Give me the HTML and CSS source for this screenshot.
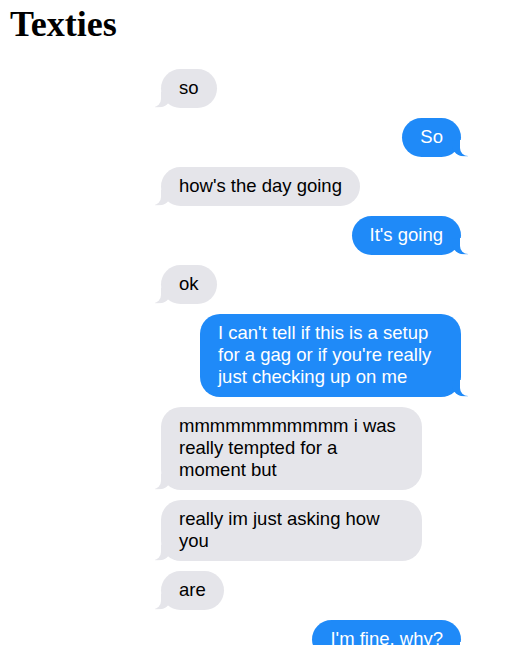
FILE: index.html
```
<!DOCTYPE html>
<html lang="en">
<head>
    <meta charset="UTF-8">
    <meta name="viewport" content="width=device-width, initial-scale=1.0">
    <title>Texties</title>
    <link rel="stylesheet" href="styles.css">
</head>
<body>
    <h1>Texties</h1>

    <div class="chat">
        <p class="from-them">so</p>
        <p class="from-me">So</p>
        <p class="from-them">how's the day going</p>
        <p class="from-me">It's going</p>
        <p class="from-them">ok</p>
        <p class="from-me">I can't tell if this is a setup for a gag or if you're really just checking up on me</p>
        <p class="from-them">mmmmmmmmmmm i was really tempted for a moment but</p>
        <p class="from-them">really im just asking how you</p>
        <p class="from-them">are</p>
        <p class="from-me">I'm fine, why?</p>
    </div>
</body>
</html>
```

FILE: styles.css
```
body {
    margin: 0;
    padding: 3px 10px 0;
    background-color: #fff;
}
h1 {
    font-family: "Liberation Serif", "Times New Roman", serif;
    font-size: 36px;
    margin: 0 0 24px;
}
.chat {
    display: flex;
    flex-direction: column;
    width: 300px;
    margin-left: 151px;
    font-family: "Liberation Sans", Arial, sans-serif;
    font-size: 18.5px;
}
.chat p {
    position: relative;
    box-sizing: border-box;
    max-width: 261px;
    margin: 0 0 10.5px;
    padding: 8.25px 18px;
    line-height: 22px;
    border-radius: 20px;
    word-wrap: break-word;
}
.chat p::before,
.chat p::after {
    content: "";
    position: absolute;
    bottom: -1.6px;
    height: 16px;
}
.from-me {
    align-self: flex-end;
    background-color: #1f8af8;
    color: #fff;
}
.from-me::before {
    right: -7px;
    border-right: 16px solid #1f8af8;
    border-bottom-left-radius: 13px 11px;
    transform: translate(0, -1.6px);
}
.from-me::after {
    right: -40px;
    width: 10px;
    background-color: #fff;
    border-bottom-left-radius: 8px;
    transform: translate(-31px, -2px);
}
.from-them {
    align-self: flex-start;
    background-color: #e5e5ea;
    color: #000;
}
.from-them::before {
    left: -5.6px;
    border-left: 16px solid #e5e5ea;
    border-bottom-right-radius: 13px 11px;
    transform: translate(0, -1.6px);
}
.from-them::after {
    left: 20px;
    width: 10px;
    background-color: #fff;
    border-bottom-right-radius: 8px;
    transform: translate(-30px, -2px);
}
```
